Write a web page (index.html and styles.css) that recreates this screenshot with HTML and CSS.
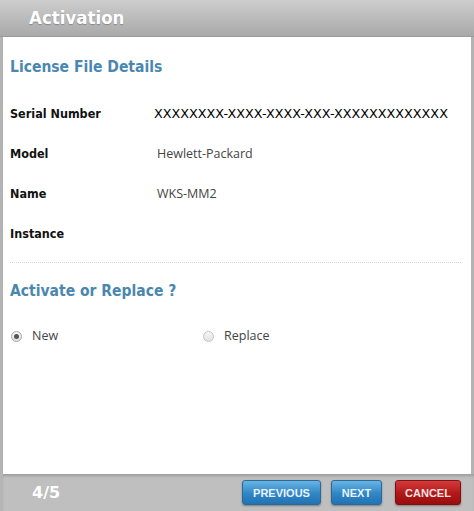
FILE: index.html
```html
<!DOCTYPE html>
<html>
<head>
<meta charset="utf-8">
<link rel="stylesheet" href="styles.css">
</head>
<body>
<div class="dialog">
  <div class="header"><span class="title">Activation</span></div>
  <div class="content">
    <h2 class="section-title first">License File Details</h2>
    <div class="details">
      <div class="row"><span class="label">Serial Number</span><span class="value serial">XXXXXXXX-XXXX-XXXX-XXX-XXXXXXXXXXXXX</span></div>
      <div class="row"><span class="label">Model</span><span class="value">Hewlett-Packard</span></div>
      <div class="row"><span class="label">Name</span><span class="value">WKS-MM2</span></div>
      <div class="row"><span class="label">Instance</span><span class="value"></span></div>
    </div>
    <div class="divider"></div>
    <h2 class="section-title second">Activate or Replace ?</h2>
    <div class="options">
      <label class="option opt-new"><span class="radio checked"></span><span class="opt-text">New</span></label>
      <label class="option"><span class="radio"></span><span class="opt-text">Replace</span></label>
    </div>
  </div>
  <div class="footer">
    <span class="step">4/5</span>
    <div class="buttons">
      <button class="btn blue prev">PREVIOUS</button>
      <button class="btn blue next">NEXT</button>
      <button class="btn red cancel">CANCEL</button>
    </div>
  </div>
</div>
</body>
</html>
```

FILE: styles.css
```css
html, body {
  margin: 0;
  padding: 0;
  background: #ffffff;
}
.dialog {
  width: 474px;
  height: 511px;
  display: flex;
  flex-direction: column;
  font-family: "DejaVu Sans Condensed", "DejaVu Sans", sans-serif;
}
.header {
  height: 37px;
  flex: none;
  background: linear-gradient(#cdcdcd, #a9a9a9);
  border-bottom: 1px solid #9a9a9a;
  box-sizing: border-box;
  display: flex;
  align-items: center;
  padding-left: 29px;
}
.title {
  color: #ffffff;
  font-weight: bold;
  font-size: 18.5px;
  text-shadow: 0 1px 1px rgba(0,0,0,0.25);
  margin-top: -1px;
}
.content {
  flex: 1;
  border-left: 3px solid #b3b3b3;
  border-right: 3px solid #b3b3b3;
  padding: 0 7px 0 7px;
  display: flex;
  flex-direction: column;
}
.section-title {
  margin: 0;
  color: #4a87b0;
  font-size: 15.5px;
  font-weight: bold;
  line-height: 18px;
}
.section-title.first {
  margin-top: 21px;
}
.section-title.second {
  margin-top: 19px;
}
.details {
  margin-top: 17px;
  display: flex;
  flex-direction: column;
}
.row {
  display: flex;
  align-items: center;
  height: 40px;
}
.label {
  width: 140px;
  flex: none;
  font-weight: bold;
  font-size: 12.5px;
  color: #111111;
}
.value {
  font-family: "Open Sans", sans-serif;
  font-size: 12.5px;
  color: #444444;
  margin-left: 7px;
}
.value.serial {
  font-family: "DejaVu Sans", sans-serif;
  font-size: 12.8px;
  color: #000000;
  margin-left: 4px;
}
.divider {
  margin-top: 9px;
  height: 0;
  border-top: 1px dotted #d6d6d6;
  margin-right: 3px;
}
.options {
  display: flex;
  margin-top: 28px;
  align-items: center;
}
.option {
  display: flex;
  align-items: center;
  font-family: "Open Sans", sans-serif;
  font-size: 12.5px;
  color: #444444;
}
.opt-new {
  width: 192px;
}
.radio {
  width: 11px;
  height: 11px;
  border-radius: 50%;
  border: 1px solid #c4c4c4;
  background: linear-gradient(#f6f6f6, #e2e2e2);
  box-sizing: border-box;
  margin-left: 1px;
  margin-right: 10px;
  position: relative;
}
.radio.checked {
  border-color: #a8a8a8;
}
.radio.checked::after {
  content: "";
  position: absolute;
  left: 2px;
  top: 2px;
  width: 5px;
  height: 5px;
  border-radius: 50%;
  background: #555555;
}
.opt-text {
  line-height: 16px;
}
.footer {
  height: 37px;
  flex: none;
  background: #bfbfbf;
  box-shadow: inset 0 3px 3px -1px rgba(0,0,0,0.18);
  border-left: 3px solid #b5b5b5;
  box-sizing: border-box;
  display: flex;
  align-items: center;
  padding-left: 29px;
}
.step {
  color: #ffffff;
  font-family: "DejaVu Sans", sans-serif;
  font-weight: bold;
  font-size: 16px;
  width: 210px;
}
.buttons {
  display: flex;
  gap: 10px;
  align-items: center;
}
.btn {
  height: 25px;
  border-radius: 3px;
  font-family: "Liberation Sans", Arial, sans-serif;
  font-weight: bold;
  font-size: 11px;
  padding: 0;
  cursor: pointer;
  box-shadow: 0 1px 2px rgba(0,0,0,0.35);
}
.btn.blue {
  background: linear-gradient(#69b4e4, #2f86c6 55%, #2373b3);
  border: 1px solid #2a6a99;
  color: #e8f3fb;
}
.btn.red {
  background: linear-gradient(#d53a3a, #b01818 55%, #9b0e0e);
  border: 1px solid #7e1010;
  color: #f6e2e2;
}
.prev { width: 79px; }
.next { width: 51px; }
.cancel { width: 66px; margin-left: 3px; }
```
